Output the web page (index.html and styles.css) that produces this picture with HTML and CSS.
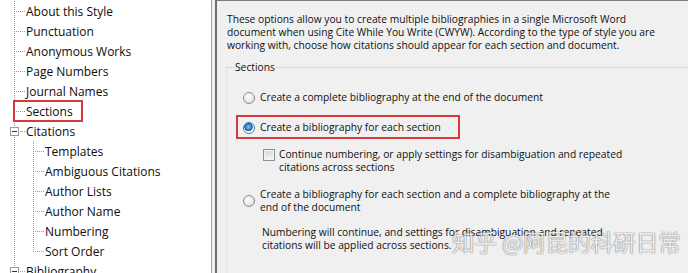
FILE: index.html
```html
<!DOCTYPE html>
<html lang="en">
<head>
    <meta charset="UTF-8">
    <meta name="viewport" content="width=device-width, initial-scale=1.0">
    <title>Output Style - Sections</title>
    <link rel="stylesheet" href="styles.css">
</head>
<body>
    <div class="window">
        <div class="tree">
            <ul class="tree-root">
                <li class="node"><div class="row">About this Style</div></li>
                <li class="node"><div class="row">Punctuation</div></li>
                <li class="node"><div class="row">Anonymous Works</div></li>
                <li class="node"><div class="row">Page Numbers</div></li>
                <li class="node"><div class="row">Journal Names</div></li>
                <li class="node marked"><div class="row">Sections</div></li>
                <li class="node">
                    <div class="row"><span class="toggle"></span>Citations</div>
                    <ul class="children">
                        <li class="node"><div class="row">Templates</div></li>
                        <li class="node"><div class="row">Ambiguous Citations</div></li>
                        <li class="node"><div class="row">Author Lists</div></li>
                        <li class="node"><div class="row">Author Name</div></li>
                        <li class="node"><div class="row">Numbering</div></li>
                        <li class="node"><div class="row">Sort Order</div></li>
                    </ul>
                </li>
                <li class="node"><div class="row"><span class="toggle"></span>Bibliography</div></li>
            </ul>
        </div>
        <div class="splitter"></div>
        <div class="panel">
            <p class="intro">These options allow you to create multiple bibliographies in a single Microsoft Word<br>document when using Cite While You Write (CWYW). According to the type of style you are<br>working with, choose how citations should appear for each section and document.</p>

            <div class="group">
                <div class="group-title">Sections</div>

                <div class="opt opt-first">
                    <span class="radio"></span>
                    <span>Create a complete bibliography at the end of the document</span>
                </div>

                <div class="opt opt-marked">
                    <span class="radio checked"></span>
                    <span>Create a bibliography for each section</span>
                </div>

                <div class="check-row">
                    <span class="checkbox"></span>
                    <span>Continue numbering, or apply settings for disambiguation and repeated<br>citations across sections</span>
                </div>

                <div class="opt opt-two">
                    <span class="radio"></span>
                    <span>Create a bibliography for each section and a complete bibliography at the<br>end of the document</span>
                </div>

                <p class="note">Numbering will continue, and settings for disambiguation and repeated<br>citations will be applied across sections.</p>
            </div>
        </div>

        <div class="watermark">知乎 @阿昆的科研日常</div>
    </div>
</body>
</html>
```

FILE: styles.css
```css
* {
    padding: 0;
    margin: 0;
    box-sizing: border-box;
}

body {
    background: #f0f0f0;
    font-family: 'Open Sans', 'Noto Sans', sans-serif;
    color: #111;
}

.window {
    position: relative;
    display: flex;
    width: 688px;
    height: 273px;
    overflow: hidden;
}

/* left tree */

.tree {
    width: 212px;
    height: 100%;
    background: white;
    border-right: 1px solid #a3a3a3;
    padding-top: 1px;
    font-size: 12px;
    color: #0d0d0d;
}

.tree ul {
    list-style: none;
}

.tree-root {
    padding-left: 14px;
}

.node {
    padding-left: 12px;
    background:
        repeating-linear-gradient(to bottom, #9a9a9a 0 1px, transparent 1px 2px) no-repeat 0 0 / 1px 100%,
        repeating-linear-gradient(to right, #9a9a9a 0 1px, transparent 1px 2px) no-repeat 2px 10px / 9px 1px;
}

.children {
    margin-left: 7px;
}

.children .node:last-child {
    background:
        repeating-linear-gradient(to bottom, #9a9a9a 0 1px, transparent 1px 2px) no-repeat 0 0 / 1px 11px,
        repeating-linear-gradient(to right, #9a9a9a 0 1px, transparent 1px 2px) no-repeat 2px 10px / 9px 1px;
}

.row {
    display: flex;
    align-items: center;
    height: 20px;
    white-space: nowrap;
}

.marked {
    width: 68px;
    outline: 2px solid #d9393c;
    outline-offset: -1px;
}

.toggle {
    width: 9px;
    height: 9px;
    margin-left: -16px;
    margin-right: 7px;
    border: 1px solid #9a9a9a;
    background: white;
    display: flex;
    align-items: center;
    justify-content: center;
}

.toggle::after {
    content: "";
    width: 5px;
    height: 1px;
    background: #333;
}

/* splitter */

.splitter {
    width: 3px;
    background: #f0f0f0;
}

/* right panel */

.panel {
    flex: 1;
    border-left: 2px solid #6e6e6e;
    border-top: 1px solid #7d7d7d;
    padding: 12px 0 0 9px;
    font-size: 10.25px;
    line-height: 13px;
    white-space: nowrap;
}

.intro {
    padding-left: 1px;
}

.group {
    margin-top: 15px;
    border-top: 1px solid #d7d7d7;
    border-left: 1px solid #e4e4e4;
    height: 300px;
}

.group-title {
    width: fit-content;
    margin: -7px 0 0 7px;
    padding: 0 1px;
    background: #f0f0f0;
}

.opt {
    display: flex;
    align-items: center;
    padding-left: 16px;
}

.opt-first {
    margin-top: 17px;
}

.opt-marked {
    display: inline-flex;
    margin-top: 11px;
    margin-left: 9px;
    padding: 4px 0 3px 5px;
    width: 224px;
    border: 2px solid #d9393c;
}

.opt-two {
    margin-top: 14px;
}

.radio {
    width: 12px;
    height: 12px;
    margin-right: 5px;
    border-radius: 50%;
    border: 1px solid #8c8c8c;
    background: radial-gradient(circle at 40% 35%, #ffffff 0%, #eaeaea 55%, #cfcfcf 100%);
    flex-shrink: 0;
}

.radio.checked {
    border-color: #3d7bad;
    background:
        radial-gradient(circle at 45% 40%, #8fc6ee 0%, #2f7fc0 35%, #1d5f95 48%, #ffffff 55%, #e7f1f9 100%);
}

.check-row {
    display: flex;
    align-items: flex-start;
    margin-top: 9px;
    padding-left: 36px;
}

.checkbox {
    width: 12px;
    height: 12px;
    margin-top: 1px;
    margin-right: 4px;
    border: 1px solid #8e8f8f;
    background: linear-gradient(#d8d8d8, #f6f6f6);
    box-shadow: inset 0 0 0 1px #f4f4f4;
    flex-shrink: 0;
}

.note {
    margin-top: 12px;
    padding-left: 35px;
}

/* overlay mark */

.watermark {
    position: absolute;
    left: 452px;
    top: 226px;
    font-family: 'Noto Sans CJK SC', sans-serif;
    font-size: 22.5px;
    line-height: 30px;
    color: rgba(255, 255, 255, 0.88);
    text-shadow: 0 0 1px rgba(0, 0, 0, 0.55), 0 0 2px rgba(0, 0, 0, 0.25);
    white-space: nowrap;
}
```
